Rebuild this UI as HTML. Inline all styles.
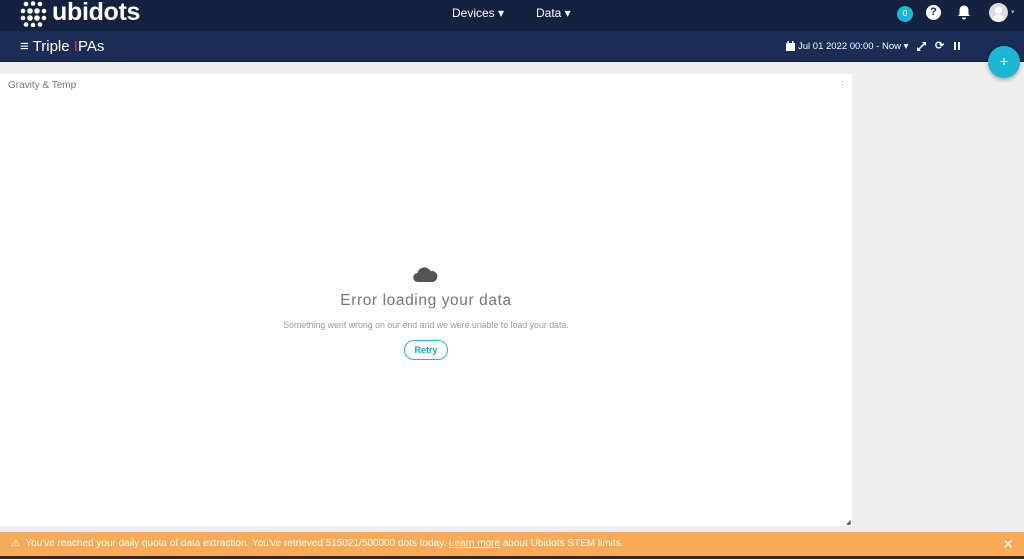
<!DOCTYPE html>
<html><head><meta charset="utf-8"><style>
*{margin:0;padding:0;box-sizing:border-box}
body{width:1024px;height:559px;overflow:hidden;background:#efefef;font-family:"Liberation Sans",sans-serif;position:relative}
.top{position:absolute;left:0;top:0;width:1024px;height:31px;background:#14213f}
.sub{position:absolute;left:0;top:31px;width:1024px;height:31px;background:#1b2c55;border-bottom:1px solid #0e1a36}
.w{color:#fff;position:absolute}
.card{position:absolute;left:0;top:74px;width:852px;height:452px;background:#fff}
.banner{position:absolute;left:0;top:532px;width:1024px;height:24px;background:#f8aa55;color:#fff;font-size:10px;line-height:24px;padding-left:11px}
.strip{position:absolute;left:0;top:556px;width:1024px;height:3px;background:#2a2a22}
</style></head><body>
<div class="top">
 <svg style="position:absolute;left:20px;top:1px" width="28" height="26" viewBox="0 0 28 26" fill="#fff">
  <circle cx="6" cy="3" r="2.3"/><circle cx="13" cy="2.5" r="2.3"/><circle cx="20" cy="3" r="2.3"/>
  <circle cx="3" cy="10" r="2.3"/><circle cx="10" cy="10" r="2.8"/><circle cx="17" cy="10" r="2.8"/><circle cx="24" cy="10" r="2.3"/>
  <circle cx="3" cy="17" r="2.3"/><circle cx="10" cy="17" r="2.8"/><circle cx="17" cy="17" r="2.8"/><circle cx="24" cy="17" r="2.3"/>
  <circle cx="6" cy="23.5" r="2.3"/><circle cx="13" cy="24" r="2.3"/><circle cx="20" cy="23.5" r="2.3"/>
 </svg>
 <div class="w" style="left:52px;top:-2px;font-size:25px;font-weight:bold;letter-spacing:-0.3px">ubidots</div>
 <div class="w" style="left:452px;top:6px;font-size:12px">Devices ▾</div>
 <div class="w" style="left:536px;top:6px;font-size:12px">Data ▾</div>
 <div style="position:absolute;left:897px;top:6px;width:16px;height:16px;border-radius:50%;background:#1cb8d3;color:#fff;font-size:8px;text-align:center;line-height:16px">0</div>
 <div style="position:absolute;left:926px;top:5px;width:15px;height:15px;border-radius:50%;background:#fff;color:#14213f;font-size:11px;font-weight:bold;text-align:center;line-height:15px">?</div>
 <svg style="position:absolute;left:957px;top:5px" width="14" height="15" viewBox="0 0 14 15" fill="#fff"><path d="M7 0.5c-3 0-4.5 2.3-4.5 5v3.5L1 11h12l-1.5-2V5.5C11.5 2.8 10 .5 7 .5z"/><path d="M5 12.5h4a2 2 0 0 1-4 0z"/></svg>
 <div style="position:absolute;left:989px;top:3px;width:19px;height:19px;border-radius:50%;background:#ddd;overflow:hidden"><div style="position:absolute;left:6px;top:4px;width:7px;height:7px;border-radius:50%;background:#fff"></div><div style="position:absolute;left:3px;top:12px;width:13px;height:10px;border-radius:50%;background:#fff"></div></div>
 <div class="w" style="left:1011px;top:8px;font-size:7px;color:#aaa">▾</div>
</div>
<div class="sub">
 <div class="w" style="left:20px;top:7px;font-size:15px">≡ Triple <span style="color:#e63b3b">I</span>PAs</div>
 <svg style="position:absolute;left:786px;top:10px" width="9" height="10"><rect x="0" y="2" width="9" height="8" fill="#fff"/><rect x="1.5" y="0" width="1.5" height="3" fill="#fff"/><rect x="6" y="0" width="1.5" height="3" fill="#fff"/></svg>
 <div class="w" style="left:798px;top:10px;font-size:9.5px">Jul 01 2022 00:00 - Now ▾</div>
 <svg style="position:absolute;left:917px;top:11px" width="9" height="9" stroke="#fff" stroke-width="1.5" fill="#fff"><path d="M1 8L8 1"/><path d="M0 9V5L4 9z" stroke="none"/><path d="M9 0V4L5 0z" stroke="none"/></svg>
 <div class="w" style="left:935px;top:8px;font-size:11px;font-weight:bold">⟳</div>
 <div style="position:absolute;left:954px;top:11px;width:2px;height:8px;background:#fff"></div>
 <div style="position:absolute;left:958px;top:11px;width:2px;height:8px;background:#fff"></div>
</div>
<div style="position:absolute;left:988px;top:46px;width:32px;height:32px;border-radius:50%;background:#1cb8d3;color:#fff;text-align:center;line-height:31px;font-size:14px;box-shadow:0 2px 4px rgba(0,0,0,.3)">+</div>
<div class="card">
 <div style="position:absolute;left:8px;top:6px;font-size:10px;color:#777">Gravity &amp; Temp</div>
 <div style="position:absolute;left:841px;top:6px;font-size:10px;color:#bbb;line-height:3px">·<br>·<br>·</div>
 <svg style="position:absolute;left:413px;top:190px" width="25" height="19" viewBox="0 0 25 19"><path d="M5 18a4.5 4.5 0 0 1-.5-9 7 7 0 0 1 13-2 5.5 5.5 0 0 1 2.5 11z" fill="#555"/></svg>
 <div style="position:absolute;left:0;width:852px;top:218px;text-align:center;font-size:15.5px;color:#777;letter-spacing:.6px">Error loading your data</div>
 <div style="position:absolute;left:0;width:852px;top:246px;text-align:center;font-size:8.8px;color:#999">Something went wrong on our end and we were unable to load your data.</div>
 <div style="position:absolute;left:404px;top:266px;width:44px;height:20px;border:1px solid #1cb8d3;border-radius:10px;color:#1aa8c6;font-size:9px;font-weight:bold;text-align:center;line-height:18px">Retry</div>
 <div style="position:absolute;left:846px;top:445px;font-size:6px;color:#555">◢</div>
</div>
<div class="banner">⚠&nbsp; You've reached your daily quota of data extraction. You've retrieved 515021/500000 dots today. <u>Learn more</u> about Ubidots STEM limits.
 <span style="position:absolute;right:10px;top:0;font-size:14px">✕</span></div>
<div class="strip"></div>
</body></html>
